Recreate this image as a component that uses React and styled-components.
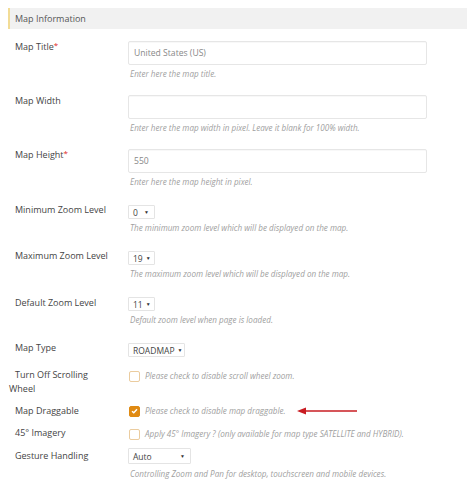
import React from 'react';
import styled, { createGlobalStyle } from 'styled-components';

const GlobalStyle = createGlobalStyle`
    body {
        margin: 0;
        background: #fff;
        font-family: "Open Sans", "Liberation Sans", sans-serif;
    }
`;

const Page = styled.div`
    padding: 8px 7px 0 8px;
`;

const Header = styled.div`
    height: 21px;
    line-height: 21px;
    background: #f1f1f1;
    border-left: 2px solid #f2dc96;
    padding-left: 5px;
    font-size: 9px;
    color: #555;
`;

const Form = styled.div`
    padding: 11px 0 0 1px;
`;

const Row = styled.div`
    display: grid;
    grid-template-columns: 119px 299px;
    align-items: start;
    margin-bottom: ${({ $mb }) => $mb}px;
`;

const Label = styled.div`
    font-size: 9px;
    line-height: 14px;
    color: #444;
    text-indent: 6px;
    padding-right: 17px;
    margin-top: ${({ $mt = 0 }) => $mt}px;
`;

const Req = styled.span`
    color: #e02424;
    font-size: 8px;
    vertical-align: top;
    line-height: 10px;
`;

const Control = styled.div`
    display: flex;
    flex-direction: column;
    align-items: flex-start;
`;

const TextInput = styled.div`
    box-sizing: border-box;
    width: 299px;
    height: 24px;
    margin-top: 1px;
    border: 1px solid #e6e6e6;
    border-radius: 2px;
    box-shadow: inset 0 1px 1px rgba(0, 0, 0, .03);
    padding-left: 5px;
    font-size: 8.6px;
    line-height: 22px;
    color: #888;
`;

const Help = styled.div`
    margin-top: ${({ $mt = 3 }) => $mt}px;
    margin-left: 2px;
    font-size: 8.1px;
    line-height: 12px;
    font-style: italic;
    color: #a0a0a0;
    white-space: nowrap;
`;

const Select = styled.div`
    box-sizing: border-box;
    display: flex;
    align-items: center;
    justify-content: space-between;
    width: ${({ $w }) => $w}px;
    height: ${({ $h = 14 }) => $h}px;
    margin-top: ${({ $mt = 1 }) => $mt}px;
    border: 1px solid #e4e4e4;
    border-radius: 1px;
    padding: 0 5px 0 4px;
    font-size: 8.5px;
    color: #444;
`;

const Caret = styled.span`
    margin-left: 3px;
    font-size: 5px;
    color: #333;
`;

const CheckRow = styled.div`
    display: flex;
    align-items: center;
    margin-top: ${({ $mt = 1 }) => $mt}px;
    margin-left: 1px;
`;

const Box = styled.span`
    box-sizing: border-box;
    display: flex;
    align-items: center;
    justify-content: center;
    width: 11px;
    height: 11px;
    border-radius: 2px;
    border: 1px solid ${({ $on }) => ($on ? '#df8a12' : '#ebcc9f')};
    background: ${({ $on }) => ($on ? '#e08a12' : '#fff')};
`;

const CheckText = styled.span`
    margin-left: 5px;
    font-size: 8.1px;
    line-height: 12px;
    font-style: italic;
    color: #a0a0a0;
    white-space: nowrap;
`;

const Arrow = styled.svg`
    margin-left: 11px;
    display: block;
`;

const Check = () => (
    <svg width="7" height="6" viewBox="0 0 7 6">
        <path d="M1 3.2 L2.8 4.8 L6 1.2" fill="none" stroke="#fff" strokeWidth="1.4" />
    </svg>
);

const App = () => (
    <>
        <GlobalStyle />
        <Page>
            <Header>Map Information</Header>
            <Form>
                <Row $mb={14}>
                    <Label>Map Title<Req>*</Req></Label>
                    <Control>
                        <TextInput>United States (US)</TextInput>
                        <Help>Enter here the map title.</Help>
                    </Control>
                </Row>
                <Row $mb={14}>
                    <Label>Map Width</Label>
                    <Control>
                        <TextInput />
                        <Help>Enter here the map width in pixel. Leave it blank for 100% width.</Help>
                    </Control>
                </Row>
                <Row $mb={15}>
                    <Label>Map Height<Req>*</Req></Label>
                    <Control>
                        <TextInput>550</TextInput>
                        <Help>Enter here the map height in pixel.</Help>
                    </Control>
                </Row>
                <Row $mb={15}>
                    <Label>Minimum Zoom Level</Label>
                    <Control>
                        <Select $w={27} $mt={2}>0<Caret>▼</Caret></Select>
                        <Help>The minimum zoom level which will be displayed on the map.</Help>
                    </Control>
                </Row>
                <Row $mb={16}>
                    <Label>Maximum Zoom Level</Label>
                    <Control>
                        <Select $w={27} $mt={2}>19<Caret>▼</Caret></Select>
                        <Help>The maximum zoom level which will be displayed on the map.</Help>
                    </Control>
                </Row>
                <Row $mb={16}>
                    <Label>Default Zoom Level</Label>
                    <Control>
                        <Select $w={27}>11<Caret>▼</Caret></Select>
                        <Help>Default zoom level when page is loaded.</Help>
                    </Control>
                </Row>
                <Row $mb={11}>
                    <Label $mt={-1}>Map Type</Label>
                    <Control>
                        <Select $w={57}>ROADMAP<Caret>▼</Caret></Select>
                    </Control>
                </Row>
                <Row $mb={8}>
                    <Label>Turn Off Scrolling Wheel</Label>
                    <Control>
                        <CheckRow $mt={2}>
                            <Box />
                            <CheckText>Please check to disable scroll wheel zoom.</CheckText>
                        </CheckRow>
                    </Control>
                </Row>
                <Row $mb={8}>
                    <Label>Map Draggable</Label>
                    <Control>
                        <CheckRow>
                            <Box $on><Check /></Box>
                            <CheckText>Please check to disable map draggable.</CheckText>
                            <Arrow width="60" height="8" viewBox="0 0 60 8">
                                <polygon points="0,4 9,0.5 9,7.5" fill="#c91c22" />
                                <line x1="6" y1="4" x2="60" y2="4" stroke="#c91c22" strokeWidth="1.6" />
                            </Arrow>
                        </CheckRow>
                    </Control>
                </Row>
                <Row $mb={9}>
                    <Label>45° Imagery</Label>
                    <Control>
                        <CheckRow $mt={2}>
                            <Box />
                            <CheckText>Apply 45° Imagery ? (only available for map type SATELLITE and HYBRID).</CheckText>
                        </CheckRow>
                    </Control>
                </Row>
                <Row $mb={10}>
                    <Label>Gesture Handling</Label>
                    <Control>
                        <Select $w={63} $h={16} $mt={-1}>Auto<Caret>▼</Caret></Select>
                        <Help $mt={4}>Controlling Zoom and Pan for desktop, touchscreen and mobile devices.</Help>
                    </Control>
                </Row>
            </Form>
        </Page>
    </>
);

export default App;
